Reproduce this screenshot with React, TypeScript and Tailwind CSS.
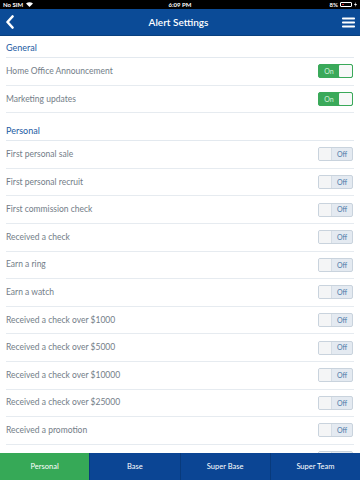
import React from 'react';

interface ToggleProps {
  on?: boolean;
}

const Toggle: React.FC<ToggleProps> = ({ on }) => {
  if (on) {
    return (
      <div className="flex w-[35px] h-[14px] rounded-[2px] border border-[#3aa95a] bg-[#3aa95a] overflow-hidden">
        <div className="flex-1 flex items-center justify-center text-[7px] text-[#d9f2df]">On</div>
        <div className="w-[13px] h-full bg-[#f7f8f8] rounded-[1px]" />
      </div>
    );
  }
  return (
    <div className="flex w-[35px] h-[14px] rounded-[2px] border border-[#c9d3dd] bg-[#e4eaf1] overflow-hidden">
      <div className="w-[13px] h-full bg-[#f4f5f6] border-r border-[#d5dde5]" />
      <div className="flex-1 flex items-center justify-center text-[7px] text-[#4b78a8]">Off</div>
    </div>
  );
};

const Row: React.FC<{ label: string; on?: boolean }> = ({ label, on }) => (
  <div className="flex items-center justify-between h-[27.6px] shrink-0 mx-[6px] border-b border-[#e6ebf0]">
    <span className="text-[8.5px] text-[#737d88]">{label}</span>
    <div className="mr-px">
      <Toggle on={on} />
    </div>
  </div>
);

const personal = [
  'First personal sale',
  'First personal recruit',
  'First commission check',
  'Received a check',
  'Earn a ring',
  'Earn a watch',
  'Received a check over $1000',
  'Received a check over $5000',
  'Received a check over $10000',
  'Received a check over $25000',
  'Received a promotion',
  'Achieved a new title',
];

const tabs = ['Personal', 'Base', 'Super Base', 'Super Team'];

export default function App() {
  return (
    <div
      className="w-[360px] h-[480px] overflow-hidden bg-white flex flex-col"
      style={{ fontFamily: 'Lato, "Open Sans", sans-serif' }}
    >
      {/* status bar */}
      <div className="h-[9px] shrink-0 bg-black flex items-center justify-between px-[3px] text-white text-[6px] font-bold leading-none">
        <div className="flex items-center gap-[3px] w-[80px]">
          <span>No SIM</span>
          <svg width="7" height="5" viewBox="0 0 7 5">
            <path d="M0 1.5 Q3.5 -1 7 1.5 L3.5 5 Z" fill="#fff" />
          </svg>
        </div>
        <span>6:09 PM</span>
        <div className="flex items-center justify-end gap-[2px] w-[80px]">
          <span>8%</span>
          <div className="w-[12px] h-[5px] border border-white rounded-[1px] p-[1px] flex">
            <div className="w-[2px] h-full bg-[#e02020]" />
          </div>
          <svg width="3" height="5" viewBox="0 0 3 5">
            <path d="M2 0 L0 3 L1.5 3 L1 5 L3 2 L1.5 2 Z" fill="#fff" />
          </svg>
        </div>
      </div>

      {/* nav bar */}
      <div className="h-[27px] shrink-0 bg-[#0b4b97] flex items-center justify-between px-[5px] border-b border-[#08407f]">
        <svg width="10" height="14" viewBox="0 0 10 14">
          <path d="M7.5 1.5 L2.5 7 L7.5 12.5" stroke="#fff" strokeWidth="2.6" fill="none" strokeLinecap="round" strokeLinejoin="round" />
        </svg>
        <span className="text-white text-[10px] font-semibold">Alert Settings</span>
        <svg width="13" height="11" viewBox="0 0 13 11">
          <rect x="0" y="0.5" width="13" height="2" rx="0.8" fill="#fff" />
          <rect x="0" y="4.5" width="13" height="2" rx="0.8" fill="#fff" />
          <rect x="0" y="8.5" width="13" height="2" rx="0.8" fill="#fff" />
        </svg>
      </div>

      {/* list */}
      <div className="flex-1 overflow-hidden flex flex-col">
        <div className="h-[22px] shrink-0 mx-[6px] flex items-end pb-[3px] border-b border-[#e3e9ef]">
          <span className="text-[9px] text-[#1d5ba3]">General</span>
        </div>
        <Row label="Home Office Announcement" on />
        <Row label="Marketing updates" on />
        <div className="h-[28px] shrink-0 mx-[6px] flex items-end pb-[3px] border-b border-[#e3e9ef]">
          <span className="text-[9px] text-[#1d5ba3]">Personal</span>
        </div>
        {personal.map((p) => (
          <Row key={p} label={p} />
        ))}
      </div>

      {/* tab bar */}
      <div className="h-[27px] shrink-0 flex text-white text-[7.5px]">
        {tabs.map((t, i) => (
          <div
            key={t}
            className={
              i === 0
                ? 'flex-1 flex items-center justify-center bg-[#36a957]'
                : 'flex-1 flex items-center justify-center bg-[#0b4594] border-l border-[#083a7c]'
            }
          >
            {t}
          </div>
        ))}
      </div>
    </div>
  );
}
